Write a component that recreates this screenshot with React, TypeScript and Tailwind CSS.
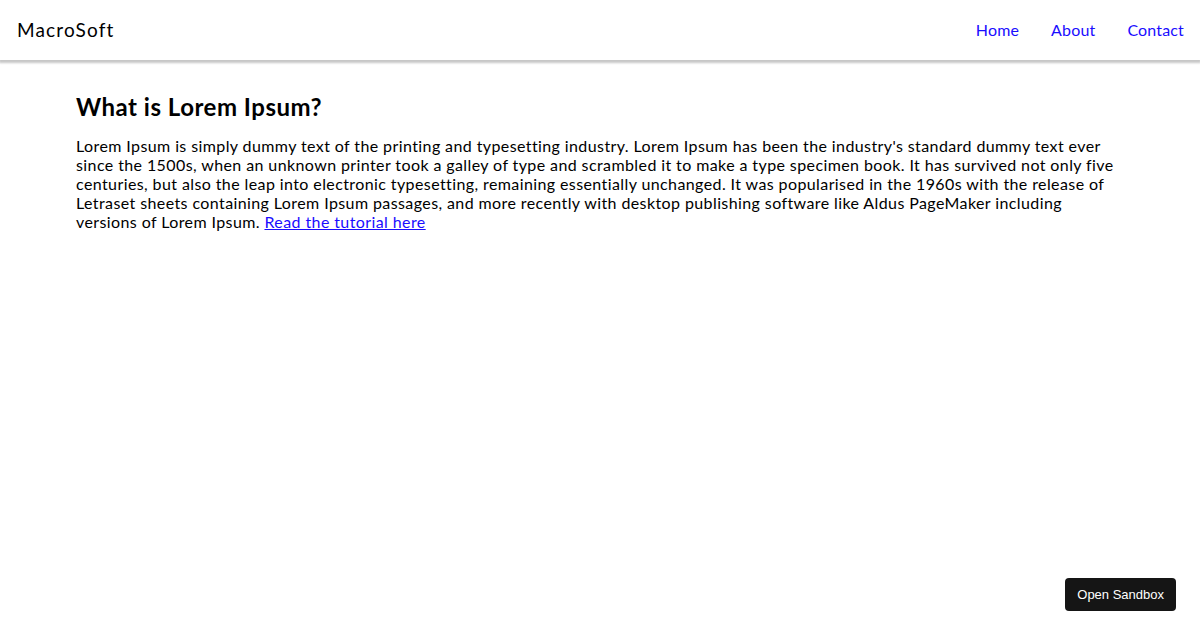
export default function App() {
  return (
    <div className="min-h-[630px] bg-white font-['Lato','Liberation_Sans',sans-serif] text-black">
      <header className="flex h-[60px] items-center justify-between pl-[17px] pr-[16px] shadow-[0_2px_2px_1px_rgba(0,0,0,0.22)]">
        <div className="text-[19px] tracking-[0.06em]">MacroSoft</div>
        <nav className="flex gap-8 text-[16px] tracking-[0.01em] text-[#1a0dff]">
          <a href="#">Home</a>
          <a href="#">About</a>
          <a href="#">Contact</a>
        </nav>
      </header>

      <main className="px-[76px] pt-[32px]">
        <h1 className="mb-[14px] text-[24px] font-bold leading-[30px] tracking-[0.5px]">What is Lorem Ipsum?</h1>
        <p className="text-[16px] leading-[19px] tracking-[0.4px]">
          Lorem Ipsum is simply dummy text of the printing and typesetting industry. Lorem Ipsum has been the
          industry's standard dummy text ever since the 1500s, when an unknown printer took a galley of type and
          scrambled it to make a type specimen book. It has survived not only five centuries, but also the leap
          into electronic typesetting, remaining essentially unchanged. It was popularised in the 1960s with the
          release of Letraset sheets containing Lorem Ipsum passages, and more recently with desktop publishing
          software like Aldus PageMaker including versions of Lorem Ipsum.{" "}
          <a href="#" className="text-[#1a0dff] underline">
            Read the tutorial here
          </a>
        </p>
      </main>

      <button className="fixed bottom-[19px] right-[24px] rounded-[4px] bg-[#151515] px-[12px] py-[8px] font-['Liberation_Sans',sans-serif] text-[13px] leading-[17px] text-white">
        Open Sandbox
      </button>
    </div>
  );
}
